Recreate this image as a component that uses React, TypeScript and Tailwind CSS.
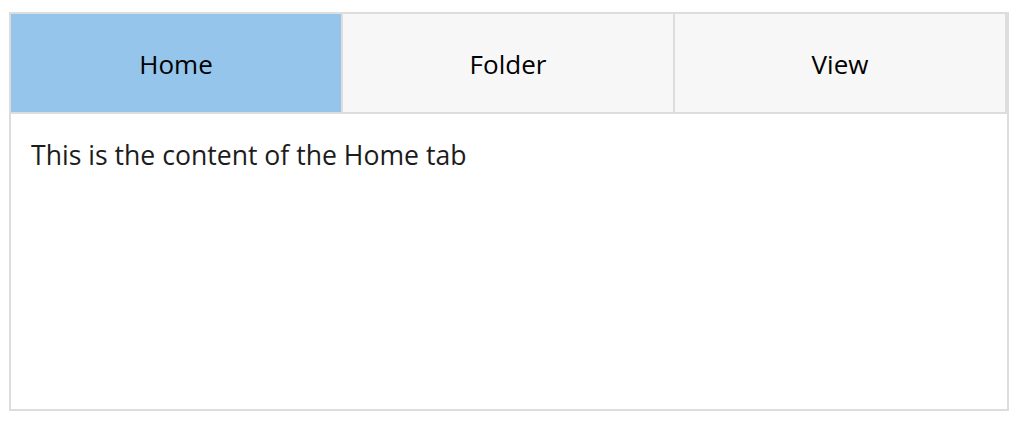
import React, { useState } from 'react';

const tabs = [
  { id: 'home', label: 'Home' },
  { id: 'folder', label: 'Folder' },
  { id: 'view', label: 'View' },
];

export default function App() {
  const [active, setActive] = useState('home');
  const current = tabs.find((t) => t.id === active)!;

  return (
    <div className="min-h-screen bg-white pl-[9px] pt-[12px] font-['Open_Sans',sans-serif]">
      <div className="flex h-[399px] w-[1000px] flex-col border-2 border-[#dddddd]">
        <div className="flex h-[100px] border-b-2 border-[#dddddd]">
          {tabs.map((tab) => (
            <button
              key={tab.id}
              type="button"
              onClick={() => setActive(tab.id)}
              className={
                tab.id === active
                  ? 'flex w-[332px] items-center justify-center border-r-2 border-[#dddddd] bg-[#95c5eb] pt-[2px] text-[26px] text-black'
                  : 'flex w-[332px] items-center justify-center border-r-2 border-[#dddddd] bg-[#f7f7f7] pt-[2px] text-[26px] text-black'
              }
            >
              {tab.label}
            </button>
          ))}
        </div>
        <div className="flex-1 px-5 pt-[23px] text-[26.6px] leading-[36px] text-[#1c1c1c]">
          This is the content of the {current.label} tab
        </div>
      </div>
    </div>
  );
}
